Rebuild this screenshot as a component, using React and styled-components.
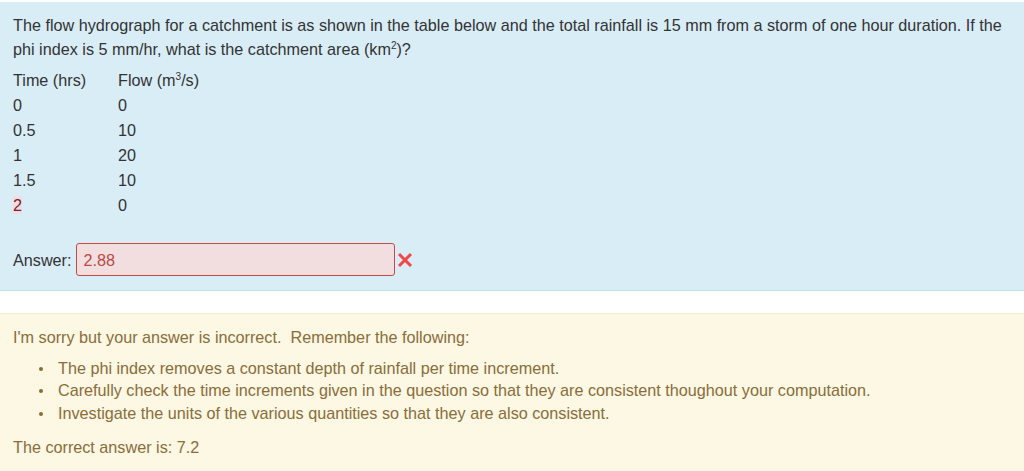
import React from "react";
import styled, { createGlobalStyle } from "styled-components";

const Global = createGlobalStyle`
    html, body {
        margin: 0;
        padding: 0;
        background: #fff;
    }
    body {
        font-family: "Liberation Sans", Arial, sans-serif;
        font-size: 16.2px;
        color: #333;
    }
    sup {
        font-size: 10px;
        line-height: 0;
        vertical-align: 6px;
    }
`;

const Page = styled.div`
    padding-top: 2px;
`;

const Question = styled.div`
    background-color: #d9edf7;
    border-bottom: 1px solid #bce8f1;
    padding: 11px 13px 14px 13px;
    line-height: 24px;
    color: #333;

    p {
        margin: 0;
    }
`;

const DataTable = styled.table`
    border-collapse: collapse;
    margin-top: 6px;

    td {
        padding: 0;
        height: 25px;
        vertical-align: middle;
    }
    td:first-child {
        width: 105px;
    }
`;

const Marked = styled.span`
    background-color: #f3dbe4;
    color: #7a1f2b;
`;

const AnswerRow = styled.div`
    display: flex;
    align-items: center;
    margin-top: 26px;
`;

const Label = styled.label`
    margin-right: 5px;
`;

const Input = styled.div`
    box-sizing: border-box;
    width: 319px;
    height: 33px;
    padding: 0 6px;
    display: flex;
    align-items: center;
    background-color: #f2dede;
    border: 1px solid #c54a48;
    border-radius: 3px;
    color: #b94a48;
`;

const Feedback = styled.div`
    margin-top: 22px;
    background-color: #fcf8e3;
    border-top: 1px solid #faebcc;
    padding: 12px 13px 14px 13px;
    color: #8a6d3b;
    line-height: 22.5px;

    p {
        margin: 0;
    }
`;

const Hints = styled.ul`
    margin: 8px 0 12px 0;
    padding-left: 45px;
    list-style: none;

    li {
        position: relative;
    }
    li::before {
        content: "";
        position: absolute;
        left: -19px;
        top: 10px;
        width: 4px;
        height: 4px;
        border-radius: 50%;
        background: #8a6d3b;
    }
`;

const rows = [
    ["0", "0"],
    ["0.5", "10"],
    ["1", "20"],
    ["1.5", "10"],
    ["2", "0"],
];

function Cross() {
    return (
        <svg width="16" height="16" viewBox="0 0 16 16" style={{ marginLeft: 2 }}>
            <path d="M2 2 L14 14 M14 2 L2 14" stroke="#f0484a" strokeWidth="3" strokeLinecap="butt" />
        </svg>
    );
}

export default function App() {
    return (
        <Page>
            <Global />
            <Question>
                <p>
                    The flow hydrograph for a catchment is as shown in the table below and the total rainfall is 15 mm from a storm of one hour duration. If the phi index is 5 mm/hr, what is the catchment area (km<sup>2</sup>)?
                </p>
                <DataTable>
                    <tbody>
                        <tr>
                            <td>Time (hrs)</td>
                            <td>
                                Flow (m<sup>3</sup>/s)
                            </td>
                        </tr>
                        {rows.map(([t, f], i) => (
                            <tr key={i}>
                                <td>{i === rows.length - 1 ? <Marked>{t}</Marked> : t}</td>
                                <td>{f}</td>
                            </tr>
                        ))}
                    </tbody>
                </DataTable>
                <AnswerRow>
                    <Label>Answer:</Label>
                    <Input>2.88</Input>
                    <Cross />
                </AnswerRow>
            </Question>
            <Feedback>
                <p>I'm sorry but your answer is incorrect.&nbsp; Remember the following:</p>
                <Hints>
                    <li>The phi index removes a constant depth of rainfall per time increment.</li>
                    <li>Carefully check the time increments given in the question so that they are consistent thoughout your computation.</li>
                    <li>Investigate the units of the various quantities so that they are also consistent.</li>
                </Hints>
                <p>The correct answer is: 7.2</p>
            </Feedback>
        </Page>
    );
}
